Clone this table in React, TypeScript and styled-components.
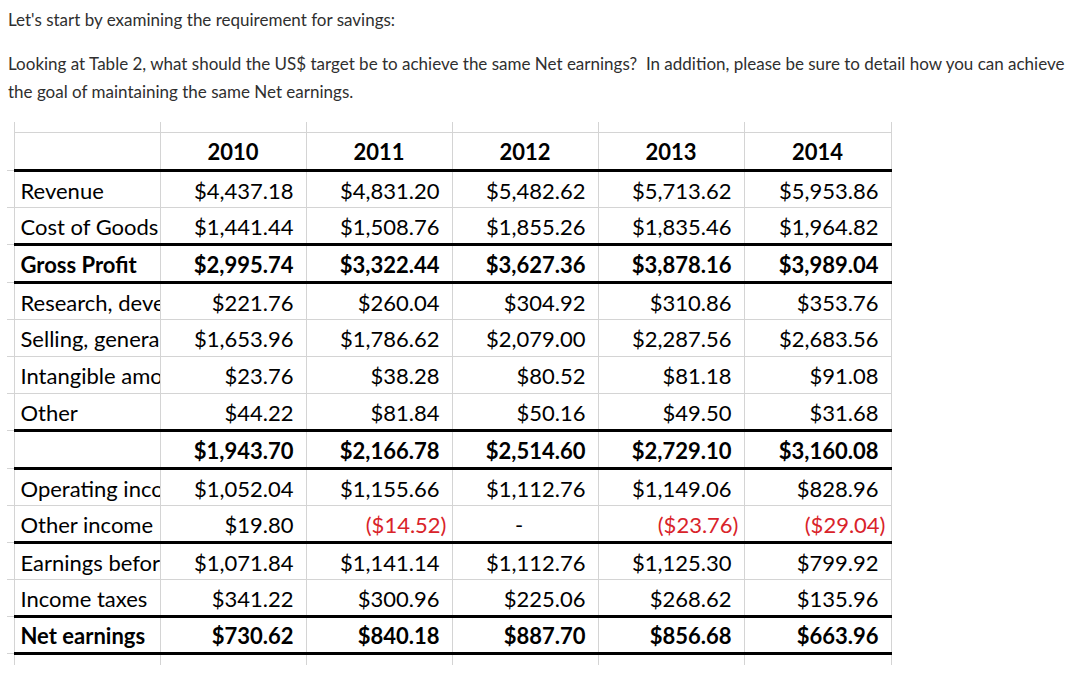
import React from 'react';
import styled, { createGlobalStyle } from 'styled-components';

interface SheetRow {
    label: string;
    values: string[];
    bold?: boolean;
    rule?: boolean;
    tall?: boolean;
}

const years = ['2010', '2011', '2012', '2013', '2014'];

const rows: SheetRow[] = [
    { label: 'Revenue', values: ['$4,437.18', '$4,831.20', '$5,482.62', '$5,713.62', '$5,953.86'] },
    { label: 'Cost of Goods', values: ['$1,441.44', '$1,508.76', '$1,855.26', '$1,835.46', '$1,964.82'], rule: true },
    { label: 'Gross Profit', values: ['$2,995.74', '$3,322.44', '$3,627.36', '$3,878.16', '$3,989.04'], bold: true, rule: true, tall: true },
    { label: 'Research, development', values: ['$221.76', '$260.04', '$304.92', '$310.86', '$353.76'] },
    { label: 'Selling, general & administrative', values: ['$1,653.96', '$1,786.62', '$2,079.00', '$2,287.56', '$2,683.56'] },
    { label: 'Intangible amortization', values: ['$23.76', '$38.28', '$80.52', '$81.18', '$91.08'] },
    { label: 'Other', values: ['$44.22', '$81.84', '$50.16', '$49.50', '$31.68'], rule: true },
    { label: '', values: ['$1,943.70', '$2,166.78', '$2,514.60', '$2,729.10', '$3,160.08'], bold: true, rule: true, tall: true },
    { label: 'Operating income', values: ['$1,052.04', '$1,155.66', '$1,112.76', '$1,149.06', '$828.96'] },
    { label: 'Other income', values: ['$19.80', '($14.52)', '-', '($23.76)', '($29.04)'], rule: true },
    { label: 'Earnings before income taxes', values: ['$1,071.84', '$1,141.14', '$1,112.76', '$1,125.30', '$799.92'] },
    { label: 'Income taxes', values: ['$341.22', '$300.96', '$225.06', '$268.62', '$135.96'], rule: true },
    { label: 'Net earnings', values: ['$730.62', '$840.18', '$887.70', '$856.68', '$663.96'], bold: true, rule: true },
];

const App: React.FC = () => {

    return (
        <>
            <GlobalStyle />
            <Intro>Let's start by examining the requirement for savings:</Intro>
            <Question>
                Looking at Table 2, what should the US$ target be to achieve the same Net earnings?&nbsp; In addition, please be sure to detail how you can achieve
                <br />
                the goal of maintaining the same Net earnings.
            </Question>

            <Sheet>
                <colgroup>
                    <GutterCol />
                    <DataCol />
                    {years.map(year => <DataCol key={year} $last={year === '2014'} />)}
                </colgroup>
                <tbody>
                    <EdgeRow $height={10}>
                        <Gutter />
                        <td />
                        {years.map(year => <td key={year} />)}
                    </EdgeRow>

                    <Row $rule $tall>
                        <Gutter />
                        <Label />
                        {years.map(year => <Head key={year}>{year}</Head>)}
                    </Row>

                    {rows.map((row, key) =>
                        <Row key={key} $rule={row.rule} $tall={row.tall}>
                            <Gutter />
                            <Label $bold={row.bold}>{row.label}</Label>
                            {row.values.map((value, i) =>
                                <Value
                                    key={i}
                                    $bold={row.bold}
                                    $negative={value.startsWith('(')}
                                    $dash={value === '-'}
                                >
                                    {value}
                                </Value>
                            )}
                        </Row>
                    )}

                    <EdgeRow $height={12}>
                        <Gutter />
                        <td />
                        {years.map(year => <td key={year} />)}
                    </EdgeRow>
                </tbody>
            </Sheet>
        </>
    );
};

const GlobalStyle = createGlobalStyle`
    body {
        margin: 0;
        padding: 6px 8px 0;
        background: #ffffff;
        font-family: Lato, "Open Sans", sans-serif;
        color: #2f2f2f;
    }
`;

const Intro = styled.p`
    margin: 0 0 16px;
    font-size: 17px;
    line-height: 28px;
    white-space: nowrap;
`;

const Question = styled.p`
    margin: 0 0 16px;
    font-size: 17px;
    line-height: 28px;
    white-space: nowrap;
`;

const Sheet = styled.table`
    border-collapse: collapse;
    table-layout: fixed;
    width: 884px;
    margin-left: -1px;
    font-family: Lato, "Liberation Sans", sans-serif;
    font-size: 22px;
    color: #000000;

    td {
        border: 1px solid #d4d4d4;
        padding: 0;
    }
`;

const GutterCol = styled.col`
    width: 7px;
`;

const DataCol = styled.col<{ $last?: boolean }>`
    width: ${p => p.$last ? 147 : 146}px;
`;

const EdgeRow = styled.tr<{ $height: number }>`
    height: ${p => p.$height}px;

    td {
        border-top: none;
        border-bottom: none;
    }

    td:first-child {
        border-right: 1px solid #d4d4d4;
    }
`;

const Row = styled.tr<{ $rule?: boolean; $tall?: boolean }>`
    height: ${p => p.$tall ? 38 : 37}px;

    & > td:not(:first-child) {
        border-bottom: ${p => p.$rule ? '3px solid #000000' : '1px solid #d4d4d4'};
    }
`;

const Gutter = styled.td`
    && {
        border-left: none;
        border-top: none;
    }
`;

const Label = styled.td<{ $bold?: boolean }>`
    && {
        padding: 2px 0 0 6px;
    }
    white-space: nowrap;
    overflow: hidden;
    text-overflow: clip;
    font-weight: ${p => p.$bold ? 700 : 400};
`;

const Head = styled.td`
    && {
        padding-top: 2px;
    }
    text-align: center;
    font-weight: 700;
`;

const Value = styled.td<{ $bold?: boolean; $negative?: boolean; $dash?: boolean }>`
    && {
        padding: 2px ${p => p.$negative ? 5 : 12}px 0 0;
    }
    text-align: ${p => p.$dash ? 'center' : 'right'};
    white-space: nowrap;
    font-weight: ${p => p.$bold ? 700 : 400};
    color: ${p => p.$negative ? '#d9232a' : '#000000'};
`;

export default App;
